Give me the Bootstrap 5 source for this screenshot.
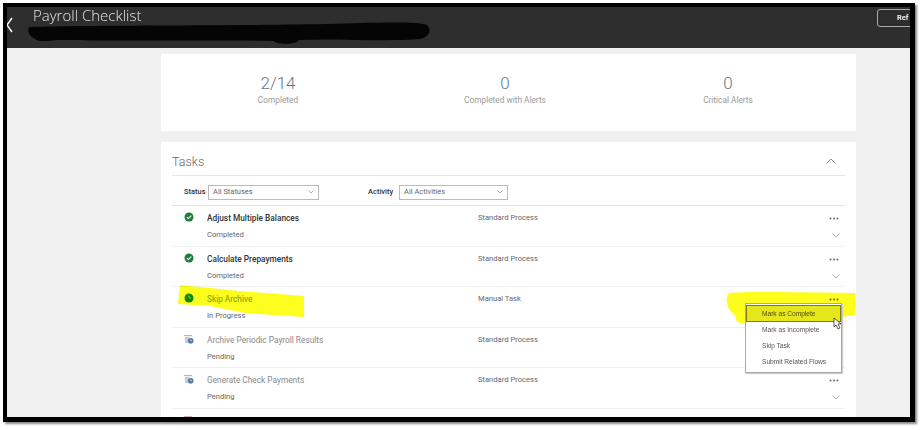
<!DOCTYPE html>
<html lang="en">
<head>
<meta charset="utf-8">
<title>Payroll Checklist</title>
<link href="https://cdn.jsdelivr.net/npm/bootstrap@5.3.0/dist/css/bootstrap.min.css" rel="stylesheet">
<style>
html,body{height:100%;margin:0;background:#fff;overflow:hidden}
body{font-family:Roboto,"Open Sans",sans-serif;color:#555}
.shot{position:relative;width:912px;height:419px;margin:3px 0 0 3px;border:solid #000;border-width:4px 5px 5px 4px;box-shadow:2px 2px 2px #888;overflow:hidden;background:#f0f0f0;display:flex;flex-direction:column;filter:blur(.45px)}
.topbar{flex:0 0 41px;background:#2e2e2e;color:#fff;position:relative;display:flex;justify-content:space-between;align-items:flex-start}
.back-ico{width:7px;height:16px;margin:10px 0 0 0;flex:none}
.page-title{font-family:"Open Sans",sans-serif;font-size:15px;font-weight:300;line-height:20px;margin:-2px 0 0 19px;color:#e4e4e4;flex:1}
.refresh{width:60px;height:18px;margin:2px -27px 0 0;border:1px solid #aaa;border-radius:3px;background:transparent;color:#eee;font-size:7.500px;font-weight:700;line-height:16px;padding:0 0 0 19px;text-align:left;overflow:hidden;white-space:nowrap}
.scribble{position:absolute;left:20px;top:14px;width:410px;height:28px}
.content{width:695px;margin:6px 0 0 154px;flex:1;display:flex;flex-direction:column;gap:11px;min-height:0}
.stats{flex:0 0 77px;background:#fff;display:grid;grid-template-columns:234px 220px 226px;text-align:center;padding-top:19px}
.stat-num{font-size:17px;font-weight:300;line-height:20px;color:#64778a}
.stat-lbl{font-size:8.300px;line-height:11px;margin-top:2px;color:#9a9a9a}
.tasks{flex:1;background:#fff;padding:0 11px;position:relative;overflow:hidden}
.tasks-head{height:34px;border-bottom:1px solid #e6e6e6;display:flex;justify-content:space-between;align-items:center;padding-top:7px}
.tasks-title{font-size:12.500px;font-weight:300;color:#666;margin:0;line-height:18px}
.chev-up{width:10px;height:6px;margin:-2px 9px 0 0}
.filters{height:30px;border-bottom:1px solid #e3e3e3;display:flex;align-items:center;padding:3px 0 0 12px;font-size:7.500px}
.flabel{font-weight:500;color:#333}
.fl1{width:24px}
.fl2{width:31px}
.fselect{height:15px;border:1px solid #bbb;display:flex;align-items:center;justify-content:space-between;padding:0 4px;color:#666;font-size:7.500px}
.fs1{width:111px;margin-right:49px}
.fs2{width:109px}
.fchev{width:6px;height:4px}
.task-row{height:40.500px;border-bottom:1px solid #f0f0f0;display:flex;font-size:7.600px;position:relative}
.task-ico{flex:0 0 35px;padding:6px 0 0 12px}
.task-ico svg{display:block;width:10px;height:10px}
.task-main{flex:0 0 271px;padding-top:6px}
.task-name{font-size:8.300px;font-weight:500;line-height:12px;color:#333}
.task-name.dim{font-weight:400;color:#888}
.task-name.onhl{font-weight:400;color:#7d9a10}
.task-state{line-height:12px;margin-top:5px;color:#666}
.task-type{flex:1;padding-top:6px;line-height:12px;color:#666}
.task-act{flex:0 0 22px;display:flex;flex-direction:column;align-items:center;padding-top:11px;gap:13px}
.dots{width:10px;height:3px;display:block}
.chev{width:8px;height:5px;display:block;margin-left:4px}
.hl{position:absolute;z-index:3;mix-blend-mode:multiply}
.hl1{left:171px;top:277px;width:127px;height:34px}
.hl2{left:719px;top:285px;width:130px;height:32px}
.action-menu{position:absolute;z-index:4;left:738px;top:296px;width:97px;height:70px;background:#fff;border:1px solid #aaa;box-shadow:1px 1px 1px #ccc;font-family:"Liberation Sans",sans-serif;font-size:6.600px;padding:2px 1px;color:#555}
.menu-line{height:16px;line-height:16px;padding-left:15px;white-space:nowrap}
.menu-line.on{background:#e6e61d;outline:1px solid #7d7d10;color:#4f4f10;height:15px;line-height:15px;margin-bottom:1px}
.pointer{position:absolute;z-index:5;left:826px;top:310px;width:9px;height:13px}
</style>
</head>
<body>
<div class="shot">
  <header class="topbar">
    <svg class="back-ico" viewBox="0 0 7 16"><path d="M5 1 0 8l5 7" fill="none" stroke="#fff" stroke-width="1.400"/></svg>
    <h1 class="page-title">Payroll Checklist</h1>
    <button class="refresh" type="button">Ref</button>
    <svg class="scribble" viewBox="0 0 410 28" preserveAspectRatio="none"><path d="M2 6C60 4 200 5 300 3c40-1 90-3 100 1 5 4 3 11-6 14-40 3-85-1-122 1-3 5-22 5-25 1-60-1-170 0-215-1C20 20 10 21 8 18 2 15 0 10 2 6Z" fill="#050505"/></svg>
  </header>
  <main class="content">
    <section class="stats">
      <div><div class="stat-num">2/14</div><div class="stat-lbl">Completed</div></div>
      <div><div class="stat-num">0</div><div class="stat-lbl">Completed with Alerts</div></div>
      <div><div class="stat-num">0</div><div class="stat-lbl">Critical Alerts</div></div>
    </section>
    <section class="tasks">
      <div class="tasks-head">
        <h2 class="tasks-title">Tasks</h2>
        <svg class="chev-up" viewBox="0 0 10 6"><path d="M.5 5.500 5 1l4.500 4.500" fill="none" stroke="#777" stroke-width=".8"/></svg>
      </div>
      <div class="filters">
        <span class="flabel fl1">Status</span>
        <div class="fselect fs1"><span>All Statuses</span><svg class="fchev" viewBox="0 0 6 4"><path d="M.5.5 3 3 5.500.5" fill="none" stroke="#888" stroke-width=".7"/></svg></div>
        <span class="flabel fl2">Activity</span>
        <div class="fselect fs2"><span>All Activities</span><svg class="fchev" viewBox="0 0 6 4"><path d="M.5.5 3 3 5.500.5" fill="none" stroke="#888" stroke-width=".7"/></svg></div>
      </div>

      <div class="task-row">
        <div class="task-ico"><svg viewBox="0 0 10 10"><circle cx="5" cy="5" r="4.500" fill="#1e7d3c"/><path d="M2.800 5.100 4.400 6.600 7.300 3.600" fill="none" stroke="#fff" stroke-width="1.100"/></svg></div>
        <div class="task-main"><div class="task-name">Adjust Multiple Balances</div><div class="task-state">Completed</div></div>
        <div class="task-type">Standard Process</div>
        <div class="task-act"><svg class="dots" viewBox="0 0 10 3"><g fill="#666"><circle cx="1.500" cy="1.500" r="1"/><circle cx="5" cy="1.500" r="1"/><circle cx="8.500" cy="1.500" r="1"/></g></svg><svg class="chev" viewBox="0 0 8 5"><path d="M.5.5 4 4 7.500.5" fill="none" stroke="#888" stroke-width=".7"/></svg></div>
      </div>
      <div class="task-row">
        <div class="task-ico"><svg viewBox="0 0 10 10"><circle cx="5" cy="5" r="4.500" fill="#1e7d3c"/><path d="M2.800 5.100 4.400 6.600 7.300 3.600" fill="none" stroke="#fff" stroke-width="1.100"/></svg></div>
        <div class="task-main"><div class="task-name">Calculate Prepayments</div><div class="task-state">Completed</div></div>
        <div class="task-type">Standard Process</div>
        <div class="task-act"><svg class="dots" viewBox="0 0 10 3"><g fill="#666"><circle cx="1.500" cy="1.500" r="1"/><circle cx="5" cy="1.500" r="1"/><circle cx="8.500" cy="1.500" r="1"/></g></svg><svg class="chev" viewBox="0 0 8 5"><path d="M.5.5 4 4 7.500.5" fill="none" stroke="#888" stroke-width=".7"/></svg></div>
      </div>
      <div class="task-row">
        <div class="task-ico"><svg viewBox="0 0 10 10"><circle cx="5" cy="5" r="4.500" fill="#0f8a2a"/><path d="M5 2.500V5h2" fill="none" stroke="#bfe05a" stroke-width=".7"/></svg></div>
        <div class="task-main"><div class="task-name onhl">Skip Archive</div><div class="task-state">In Progress</div></div>
        <div class="task-type">Manual Task</div>
        <div class="task-act"><svg class="dots" viewBox="0 0 10 3"><g fill="#666"><circle cx="1.500" cy="1.500" r="1"/><circle cx="5" cy="1.500" r="1"/><circle cx="8.500" cy="1.500" r="1"/></g></svg></div>
      </div>
      <div class="task-row">
        <div class="task-ico"><svg viewBox="0 0 10 10"><rect x=".5" y="1" width="7" height="8" fill="#eee"/><path d="M.5 1.500h7" stroke="#a06a6a" stroke-width="1.200" stroke-dasharray="1 1"/><path d="M1 4h4M1 6h3M1 8h3" stroke="#999" stroke-width=".8"/><circle cx="6.700" cy="6.700" r="2.800" fill="#4f79a8"/><path d="M6.700 5.300v1.500h1.200" fill="none" stroke="#fff" stroke-width=".6"/></svg></div>
        <div class="task-main"><div class="task-name dim">Archive Periodic Payroll Results</div><div class="task-state">Pending</div></div>
        <div class="task-type">Standard Process</div>
        <div class="task-act"></div>
      </div>
      <div class="task-row">
        <div class="task-ico"><svg viewBox="0 0 10 10"><rect x=".5" y="1" width="7" height="8" fill="#eee"/><path d="M.5 1.500h7" stroke="#a06a6a" stroke-width="1.200" stroke-dasharray="1 1"/><path d="M1 4h4M1 6h3M1 8h3" stroke="#999" stroke-width=".8"/><circle cx="6.700" cy="6.700" r="2.800" fill="#4f79a8"/><path d="M6.700 5.300v1.500h1.200" fill="none" stroke="#fff" stroke-width=".6"/></svg></div>
        <div class="task-main"><div class="task-name dim">Generate Check Payments</div><div class="task-state">Pending</div></div>
        <div class="task-type">Standard Process</div>
        <div class="task-act"><svg class="dots" viewBox="0 0 10 3"><g fill="#666"><circle cx="1.500" cy="1.500" r="1"/><circle cx="5" cy="1.500" r="1"/><circle cx="8.500" cy="1.500" r="1"/></g></svg><svg class="chev" viewBox="0 0 8 5"><path d="M.5.5 4 4 7.500.5" fill="none" stroke="#888" stroke-width=".7"/></svg></div>
      </div>
      <div class="task-row">
        <div class="task-ico"><svg viewBox="0 0 10 10"><path d="M.5 1.500h7" stroke="#a06a6a" stroke-width="1.200" stroke-dasharray="1 1"/></svg></div>
      </div>
    </section>
  </main>
  <svg class="hl hl1" viewBox="0 0 127 34"><path d="M2 1 62 7l64 5v21L67 29 32 22 0 20Z" fill="#fdfd1e"/></svg>
  <svg class="hl hl2" viewBox="0 0 130 32"><path d="M3 1C30-1 100 1 129 1c1 9 1 16 0 22-9 2-25 3-39 5-20 2-55 2-73 3-4 0-7 0-8-8-4-3-7-6-8-12C0 7 1 3 3 1Z" fill="#fdfd1e"/></svg>
  <div class="action-menu">
    <div class="menu-line on">Mark as Complete</div>
    <div class="menu-line">Mark as Incomplete</div>
    <div class="menu-line">Skip Task</div>
    <div class="menu-line">Submit Related Flows</div>
  </div>
  <svg class="pointer" viewBox="0 0 9 13"><path d="M1 1v9l2-2 2 4 2-1-2-4h3Z" fill="#fff" stroke="#333" stroke-width=".8"/></svg>
</div>
<script src="https://cdn.jsdelivr.net/npm/bootstrap@5.3.0/dist/js/bootstrap.bundle.min.js"></script>
</body>
</html>
